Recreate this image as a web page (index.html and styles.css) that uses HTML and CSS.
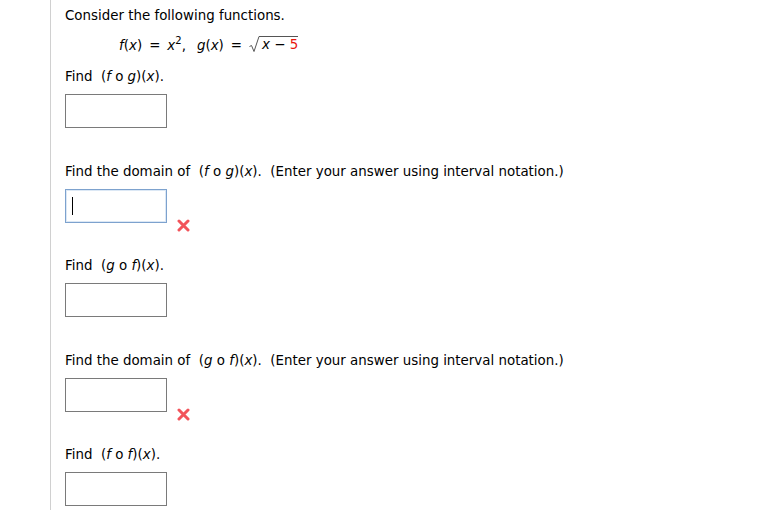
FILE: index.html
```html
<!DOCTYPE html>
<html>
<head>
<meta charset="utf-8">
<link rel="stylesheet" href="styles.css">
</head>
<body>
<div class="page">
  <p class="intro">Consider the following functions.</p>
  <p class="formula"><i>f</i>(<i>x</i>)<span class="eq">=</span><i>x</i><sup>2</sup>,<span class="sep"></span><i>g</i>(<i>x</i>)<span class="eq">=</span><span class="root"><svg class="rad" width="11" height="17" viewBox="0 0 11 17"><path d="M0.5 10.5 L2.5 9.5 L5 15.5 L10 0.5 L11 0.5" fill="none" stroke="#555" stroke-width="1"/></svg><span class="radicand"><i>x</i> &minus; <span class="red">5</span></span></span></p>

  <div class="q first">
    <p class="prompt">Find&nbsp; (<i>f</i> o <i>g</i>)(<i>x</i>).</p>
    <div class="row"><div class="box"></div></div>
  </div>

  <div class="q">
    <p class="prompt">Find the domain of&nbsp; (<i>f</i> o <i>g</i>)(<i>x</i>).&nbsp; (Enter your answer using interval notation.)</p>
    <div class="row"><div class="box focus"><span class="caret"></span></div><svg class="wrong" width="13" height="13" viewBox="0 0 13 13"><path d="M2 2 L11 11 M11 2 L2 11" stroke="#f2545b" stroke-width="3" stroke-linecap="round"/></svg></div>
  </div>

  <div class="q">
    <p class="prompt">Find&nbsp; (<i>g</i> o <i>f</i>)(<i>x</i>).</p>
    <div class="row"><div class="box"></div></div>
  </div>

  <div class="q">
    <p class="prompt">Find the domain of&nbsp; (<i>g</i> o <i>f</i>)(<i>x</i>).&nbsp; (Enter your answer using interval notation.)</p>
    <div class="row"><div class="box"></div><svg class="wrong" width="13" height="13" viewBox="0 0 13 13"><path d="M2 2 L11 11 M11 2 L2 11" stroke="#f2545b" stroke-width="3" stroke-linecap="round"/></svg></div>
  </div>

  <div class="q">
    <p class="prompt">Find&nbsp; (<i>f</i> o <i>f</i>)(<i>x</i>).</p>
    <div class="row"><div class="box"></div></div>
  </div>
</div>
</body>
</html>
```
FILE: styles.css
```css
html, body {
  margin: 0;
  padding: 0;
  background: #fff;
}
body {
  font-family: "DejaVu Sans", Verdana, sans-serif;
  font-size: 13.4px;
  color: #000;
}
.page {
  margin-left: 50px;
  border-left: 1px solid #d0d0d0;
  padding: 7px 0 0 14px;
  min-height: 503px;
}
p {
  margin: 0;
  line-height: 18px;
  white-space: nowrap;
}
.formula {
  margin-top: 11px;
  padding-left: 54px;
}
.eq {
  padding: 0 7px;
}
.sep {
  display: inline-block;
  width: 11px;
}
.formula sup {
  font-size: 10px;
  line-height: 0;
  vertical-align: 6px;
}
.root {
  display: inline-flex;
  align-items: flex-end;
  vertical-align: -3px;
}
.rad {
  display: block;
  margin-right: -1px;
}
.radicand {
  display: block;
  border-top: 1px solid #555;
  padding: 0 0 0 3px;
  line-height: 16px;
}
.red {
  color: #e8140c;
}
.q {
  margin-top: 34.5px;
}
.q.first {
  margin-top: 13px;
}
.row {
  display: flex;
  align-items: flex-start;
  margin-top: 8px;
  height: 34px;
}
.box {
  box-sizing: border-box;
  width: 102px;
  height: 34px;
  border: 1px solid #7a7a7a;
  background: #fff;
}
.box.focus {
  border-color: #7da2ce;
  box-shadow: inset 0 0 0 1px #dce8f5;
  position: relative;
}
.caret {
  position: absolute;
  left: 6px;
  top: 7px;
  width: 1px;
  height: 18px;
  background: #000;
}
.wrong {
  margin: 30px 0 0 10px;
  flex: none;
}
```
